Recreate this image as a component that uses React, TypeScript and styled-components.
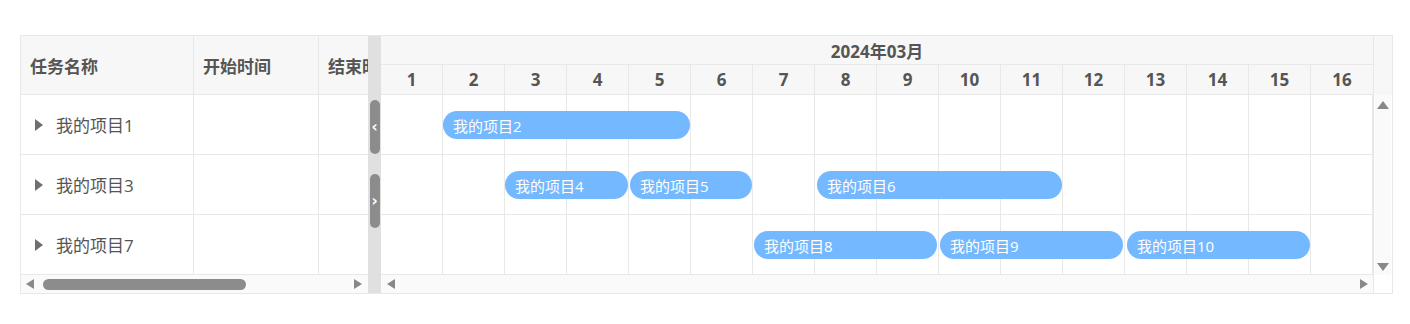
import React from "react";
import styled, { createGlobalStyle } from "styled-components";

const Global = createGlobalStyle`
  html, body { margin: 0; padding: 0; background: #fff; }
  body { font-family: "Open Sans", "Noto Sans CJK SC", sans-serif; }
`;

const BORDER = "#e8e8e8";
const HEAD_BG = "#f7f7f7";

const Page = styled.div`
  padding: 35px 0 0 20px;
`;

const Frame = styled.div`
  width: 1371px;
  border: 1px solid ${BORDER};
  display: flex;
  box-sizing: content-box;
`;

const Left = styled.div`
  width: 348px;
  display: flex;
  flex-direction: column;
  overflow: hidden;
`;

const TableRow = styled.div<{ $head?: boolean }>`
  display: flex;
  height: ${(p) => (p.$head ? 58 : 59)}px;
  border-bottom: 1px solid ${BORDER};
  background: ${(p) => (p.$head ? HEAD_BG : "#fff")};
  flex-shrink: 0;
`;

const Cell = styled.div<{ $w: number; $head?: boolean }>`
  width: ${(p) => p.$w}px;
  flex-shrink: 0;
  box-sizing: border-box;
  border-right: 1px solid ${BORDER};
  display: flex;
  align-items: center;
  padding-left: ${(p) => (p.$head ? 9 : 14)}px;
  font-size: 17px;
  font-weight: ${(p) => (p.$head ? 700 : 400)};
  color: #555;
  white-space: nowrap;
  overflow: hidden;
`;

const Caret = styled.span`
  width: 0;
  height: 0;
  border-top: 6px solid transparent;
  border-bottom: 6px solid transparent;
  border-left: 8px solid #6f6f6f;
  margin-right: 13px;
`;

const HScroll = styled.div`
  height: 18px;
  background: #fafafa;
  display: flex;
  align-items: center;
  padding: 0 6px 0 5px;
  gap: 9px;
`;

const Arrow = styled.span<{ $dir: "left" | "right" | "up" | "down" }>`
  width: 0;
  height: 0;
  flex-shrink: 0;
  ${(p) =>
    p.$dir === "left"
      ? `border-top:5px solid transparent;border-bottom:5px solid transparent;border-right:8px solid #888;`
      : p.$dir === "right"
      ? `border-top:5px solid transparent;border-bottom:5px solid transparent;border-left:8px solid #888;`
      : p.$dir === "up"
      ? `border-left:6px solid transparent;border-right:6px solid transparent;border-bottom:8px solid #888;`
      : `border-left:6px solid transparent;border-right:6px solid transparent;border-top:8px solid #888;`}
`;

const Thumb = styled.div`
  width: 203px;
  height: 11px;
  border-radius: 6px;
  background: #8c8c8c;
`;

const Spacer = styled.div`
  flex: 1;
`;

const Splitter = styled.div`
  width: 13px;
  background: #e0e0e0;
  display: flex;
  flex-direction: column;
  align-items: center;
  padding-top: 64px;
  gap: 20px;
  flex-shrink: 0;
`;

const Handle = styled.div`
  width: 10px;
  height: 54px;
  border-radius: 5px;
  background: #8c8c8c;
  color: #fff;
  font-size: 15px;
  font-weight: 700;
  font-family: "DejaVu Sans", sans-serif;
  display: flex;
  align-items: center;
  justify-content: center;
  line-height: 1;
`;

const Right = styled.div`
  flex: 1;
  display: flex;
  flex-direction: column;
`;

const Month = styled.div`
  height: 28px;
  border-bottom: 1px solid ${BORDER};
  background: ${HEAD_BG};
  display: flex;
  align-items: center;
  justify-content: center;
  font-size: 17px;
  font-weight: 700;
  color: #555;
`;

const Days = styled.div`
  height: 29px;
  display: flex;
  border-bottom: 1px solid ${BORDER};
  background: ${HEAD_BG};
`;

const Day = styled.div`
  width: 62px;
  box-sizing: border-box;
  border-right: 1px solid ${BORDER};
  display: flex;
  align-items: center;
  justify-content: center;
  font-size: 17px;
  font-weight: 700;
  color: #555;
  flex-shrink: 0;
  &:last-child { border-right: none; }
`;

const Body = styled.div`
  display: flex;
`;

const Grid = styled.div`
  width: 992px;
  display: flex;
  flex-direction: column;
`;

const GanttRow = styled.div`
  position: relative;
  height: 59px;
  border-bottom: 1px solid ${BORDER};
  display: flex;
`;

const GridCell = styled.div`
  width: 62px;
  flex-shrink: 0;
  box-sizing: border-box;
  border-right: 1px solid ${BORDER};
  &:last-child { border-right: none; }
`;

const Bar = styled.div`
  position: absolute;
  top: 16px;
  height: 28px;
  border-radius: 14px;
  background: #74b8ff;
  color: #fff;
  font-size: 15px;
  display: flex;
  align-items: center;
  padding-left: 10px;
  box-sizing: border-box;
  white-space: nowrap;
`;

const VScroll = styled.div`
  width: 18px;
  border-left: 1px solid ${BORDER};
  background: #fafafa;
  display: flex;
  flex-direction: column;
  align-items: center;
  padding: 6px 0 4px;
  box-sizing: border-box;
`;

const HeadFill = styled.div`
  width: 18px;
  border-left: 1px solid ${BORDER};
  background: ${HEAD_BG};
`;

const TopWrap = styled.div`
  display: flex;
`;

const HeadMain = styled.div`
  width: 992px;
  display: flex;
  flex-direction: column;
`;

const GanttScroll = styled.div`
  display: flex;
  height: 18px;
`;

const GanttScrollTrack = styled.div`
  width: 992px;
  background: #fafafa;
  display: flex;
  align-items: center;
  padding: 0 5px 0 6px;
  box-sizing: border-box;
`;

const Corner = styled.div`
  width: 18px;
  border-left: 1px solid ${BORDER};
  background: #fff;
`;

const days = Array.from({ length: 16 }, (_, i) => i + 1);

const rows = [
  { name: "我的项目1", bars: [{ label: "我的项目2", left: 62, width: 247 }] },
  {
    name: "我的项目3",
    bars: [
      { label: "我的项目4", left: 124, width: 123 },
      { label: "我的项目5", left: 249, width: 122 },
      { label: "我的项目6", left: 436, width: 245 },
    ],
  },
  {
    name: "我的项目7",
    bars: [
      { label: "我的项目8", left: 373, width: 183 },
      { label: "我的项目9", left: 559, width: 183 },
      { label: "我的项目10", left: 746, width: 183 },
    ],
  },
];

export default function App() {
  return (
    <Page>
      <Global />
      <Frame>
        <Left>
          <TableRow $head>
            <Cell $w={173} $head>任务名称</Cell>
            <Cell $w={125} $head>开始时间</Cell>
            <Cell $w={125} $head>结束时间</Cell>
          </TableRow>
          {rows.map((r) => (
            <TableRow key={r.name}>
              <Cell $w={173}>
                <Caret />
                {r.name}
              </Cell>
              <Cell $w={125} />
              <Cell $w={125} />
            </TableRow>
          ))}
          <HScroll>
            <Arrow $dir="left" />
            <Thumb />
            <Spacer />
            <Arrow $dir="right" />
          </HScroll>
        </Left>
        <Splitter>
          <Handle>‹</Handle>
          <Handle>›</Handle>
        </Splitter>
        <Right>
          <TopWrap>
            <HeadMain>
              <Month>2024年03月</Month>
              <Days>
                {days.map((d) => (
                  <Day key={d}>{d}</Day>
                ))}
              </Days>
            </HeadMain>
            <HeadFill />
          </TopWrap>
          <Body>
            <Grid>
              {rows.map((r) => (
                <GanttRow key={r.name}>
                  {days.map((d) => (
                    <GridCell key={d} />
                  ))}
                  {r.bars.map((b) => (
                    <Bar key={b.label} style={{ left: b.left, width: b.width }}>
                      {b.label}
                    </Bar>
                  ))}
                </GanttRow>
              ))}
            </Grid>
            <VScroll>
              <Arrow $dir="up" />
              <Spacer />
              <Arrow $dir="down" />
            </VScroll>
          </Body>
          <GanttScroll>
            <GanttScrollTrack>
              <Arrow $dir="left" />
              <Spacer />
              <Arrow $dir="right" />
            </GanttScrollTrack>
            <Corner />
          </GanttScroll>
        </Right>
      </Frame>
    </Page>
  );
}
